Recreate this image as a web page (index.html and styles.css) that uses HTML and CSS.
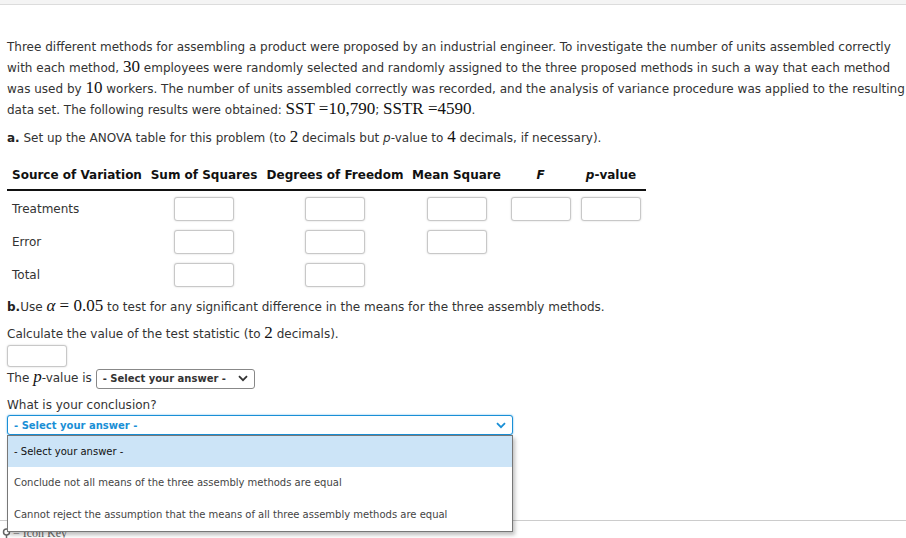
FILE: index.html
```html
<!DOCTYPE html>
<html lang="en">

<head>
    <meta charset="UTF-8">
    <meta name="viewport" content="width=device-width, initial-scale=1.0">
    <title>ANOVA Question</title>
    <link rel="stylesheet" href="styles.css">
</head>

<body>

    <div class="topbar"></div>

    <div class="question">
        <p class="intro">Three different methods for assembling a product were proposed by an industrial engineer. To investigate the number of units assembled correctly with each method, <span class="math">30</span> employees were randomly selected and randomly assigned to the three proposed methods in such a way that each method was used by <span class="math">10</span> workers. The number of units assembled correctly was recorded, and the analysis of variance procedure was applied to the resulting data set. The following results were obtained: <span class="math">SST =10,790</span>; <span class="math">SSTR =4590</span>.</p>

        <p class="part"><b>a.</b> Set up the ANOVA table for this problem (to <span class="math">2</span> decimals but <i>p</i>-value to <span class="math">4</span> decimals, if necessary).</p>

        <!-- Tabela ANOVA -->
        <table class="anova">
            <thead>
                <tr>
                    <th class="c-source">Source of Variation</th>
                    <th class="c-ss">Sum of Squares</th>
                    <th class="c-df">Degrees of Freedom</th>
                    <th class="c-ms">Mean Square</th>
                    <th class="c-f"><i>F</i></th>
                    <th class="c-p"><i>p</i>-value</th>
                </tr>
            </thead>
            <tbody>
                <tr>
                    <td>Treatments</td>
                    <td><input class="box" type="text"></td>
                    <td><input class="box" type="text"></td>
                    <td><input class="box" type="text"></td>
                    <td><input class="box" type="text"></td>
                    <td><input class="box" type="text"></td>
                </tr>
                <tr>
                    <td>Error</td>
                    <td><input class="box" type="text"></td>
                    <td><input class="box" type="text"></td>
                    <td><input class="box" type="text"></td>
                    <td></td>
                    <td></td>
                </tr>
                <tr>
                    <td>Total</td>
                    <td><input class="box" type="text"></td>
                    <td><input class="box" type="text"></td>
                    <td></td>
                    <td></td>
                    <td></td>
                </tr>
            </tbody>
        </table>

        <p class="part"><b>b.</b>Use <span class="math"><i>α</i> = 0.05</span> to test for any significant difference in the means for the three assembly methods.</p>

        <p class="calc">Calculate the value of the test statistic (to <span class="math">2</span> decimals).</p>
        <input class="box stat" type="text">

        <p class="line">The <span class="math"><i>p</i></span>-value is
            <span class="select small">- Select your answer -
                <svg class="chev" width="10" height="7" viewBox="0 0 10 7"><path d="M1 1.2 L5 5.2 L9 1.2" fill="none" stroke="#333" stroke-width="1.8"/></svg>
            </span>
        </p>

        <p class="ask">What is your conclusion?</p>

        <!-- Seletor aberto -->
        <div class="combo">
            <div class="select wide">- Select your answer -
                <svg class="chev" width="10" height="7" viewBox="0 0 10 7"><path d="M1 1.2 L5 5.2 L9 1.2" fill="none" stroke="#1a8fd6" stroke-width="1.8"/></svg>
            </div>
            <ul class="options">
                <li class="active">- Select your answer -</li>
                <li>Conclude not all means of the three assembly methods are equal</li>
                <li>Cannot reject the assumption that the means of all three assembly methods are equal</li>
            </ul>
        </div>
    </div>

    <div class="footer">
        <svg class="key" width="9" height="12" viewBox="0 0 9 12"><circle cx="4.5" cy="4" r="3" fill="none" stroke="#666" stroke-width="1.5"/><path d="M4.5 7 V11.5" stroke="#666" stroke-width="1.5"/></svg>
        <span>= Icon Key</span>
    </div>

</body>

</html>
```

FILE: styles.css
```css
body {
    margin: 0;
    font-family: "DejaVu Sans", Verdana, sans-serif;
    font-size: 12px;
    color: #333;
    background: #fff;
}

.topbar {
    height: 4px;
    background: #f4f4f4;
    border-bottom: 1px solid #dcdcdc;
}

.question {
    padding: 32px 0 0 7px;
}

.question p {
    margin: 0;
    line-height: 21px;
}

.math {
    font-family: "Liberation Serif", "DejaVu Serif", serif;
    font-size: 17px;
    line-height: 0;
    color: #111;
}

.intro {
    margin-bottom: 7px !important;
}

.part b {
    color: #222;
}

/* Tabela */
.anova {
    border-collapse: collapse;
    table-layout: fixed;
    width: 639px;
    margin: 14px 0 6px;
}

.anova th {
    font-size: 12px;
    font-weight: bold;
    color: #111;
    text-align: center;
    padding: 5px 0 7px;
    border-bottom: 2px solid #111;
    white-space: nowrap;
}

.anova th.c-source {
    text-align: left;
    padding-left: 5px;
}

.c-source { width: 134px; }
.c-ss { width: 116px; }
.c-df { width: 146px; }
.c-ms { width: 97px; }
.c-f { width: 71px; }
.c-p { width: 70px; }

.anova td {
    height: 33px;
    padding: 0;
    text-align: center;
    font-size: 12px;
}

.anova tbody tr:first-child td {
    padding-top: 1px;
}

.anova td:first-child {
    text-align: left;
    padding-left: 5px;
}

.box {
    box-sizing: border-box;
    width: 60px;
    height: 24px;
    margin: 0;
    border: 1px solid #c8c8c8;
    border-radius: 3px;
    box-shadow: 0 0 2px rgba(0, 0, 0, 0.18);
    background: #fff;
    vertical-align: middle;
}

.box.stat {
    display: block;
    height: 22px;
    margin: 0 0 1px;
}

.part,
.line {
    margin-bottom: 6px !important;
}

/* Seletores */
.select {
    display: inline-flex;
    align-items: center;
    justify-content: space-between;
    box-sizing: border-box;
    font-size: 10px;
    font-weight: bold;
    background: #fff;
    border-radius: 3px;
    vertical-align: middle;
}

.select.small {
    width: 159px;
    height: 20px;
    padding: 0 6px 0 6px;
    border: 1px solid #888;
    color: #333;
}

.combo {
    position: relative;
    width: 506px;
    margin: -1px 0 85px;
}

.select.wide {
    display: flex;
    width: 506px;
    height: 20px;
    padding: 0 6px 0 6px;
    border: 1px solid #1a8fd6;
    box-shadow: 0 0 2px #5db2e8;
    color: #1a8fd6;
}

.options {
    position: absolute;
    left: 0;
    top: 20px;
    width: 506px;
    box-sizing: border-box;
    margin: 0;
    padding: 0;
    list-style: none;
    background: #fff;
    border: 1px solid #777;
    box-shadow: 2px 3px 4px rgba(0, 0, 0, 0.25);
    z-index: 2;
}

.options li {
    height: 32px;
    line-height: 32px;
    padding-left: 6px;
    font-size: 10px;
    color: #444;
}

.options li.active {
    background: #cce4f7;
    color: #111;
    height: 31px;
    line-height: 31px;
}

.footer {
    border-top: 1px solid #ccc;
    padding: 5px 0 0 2px;
    display: flex;
    align-items: center;
    gap: 2px;
    font-family: "Liberation Serif", serif;
    font-size: 12px;
    color: #666;
}
```
